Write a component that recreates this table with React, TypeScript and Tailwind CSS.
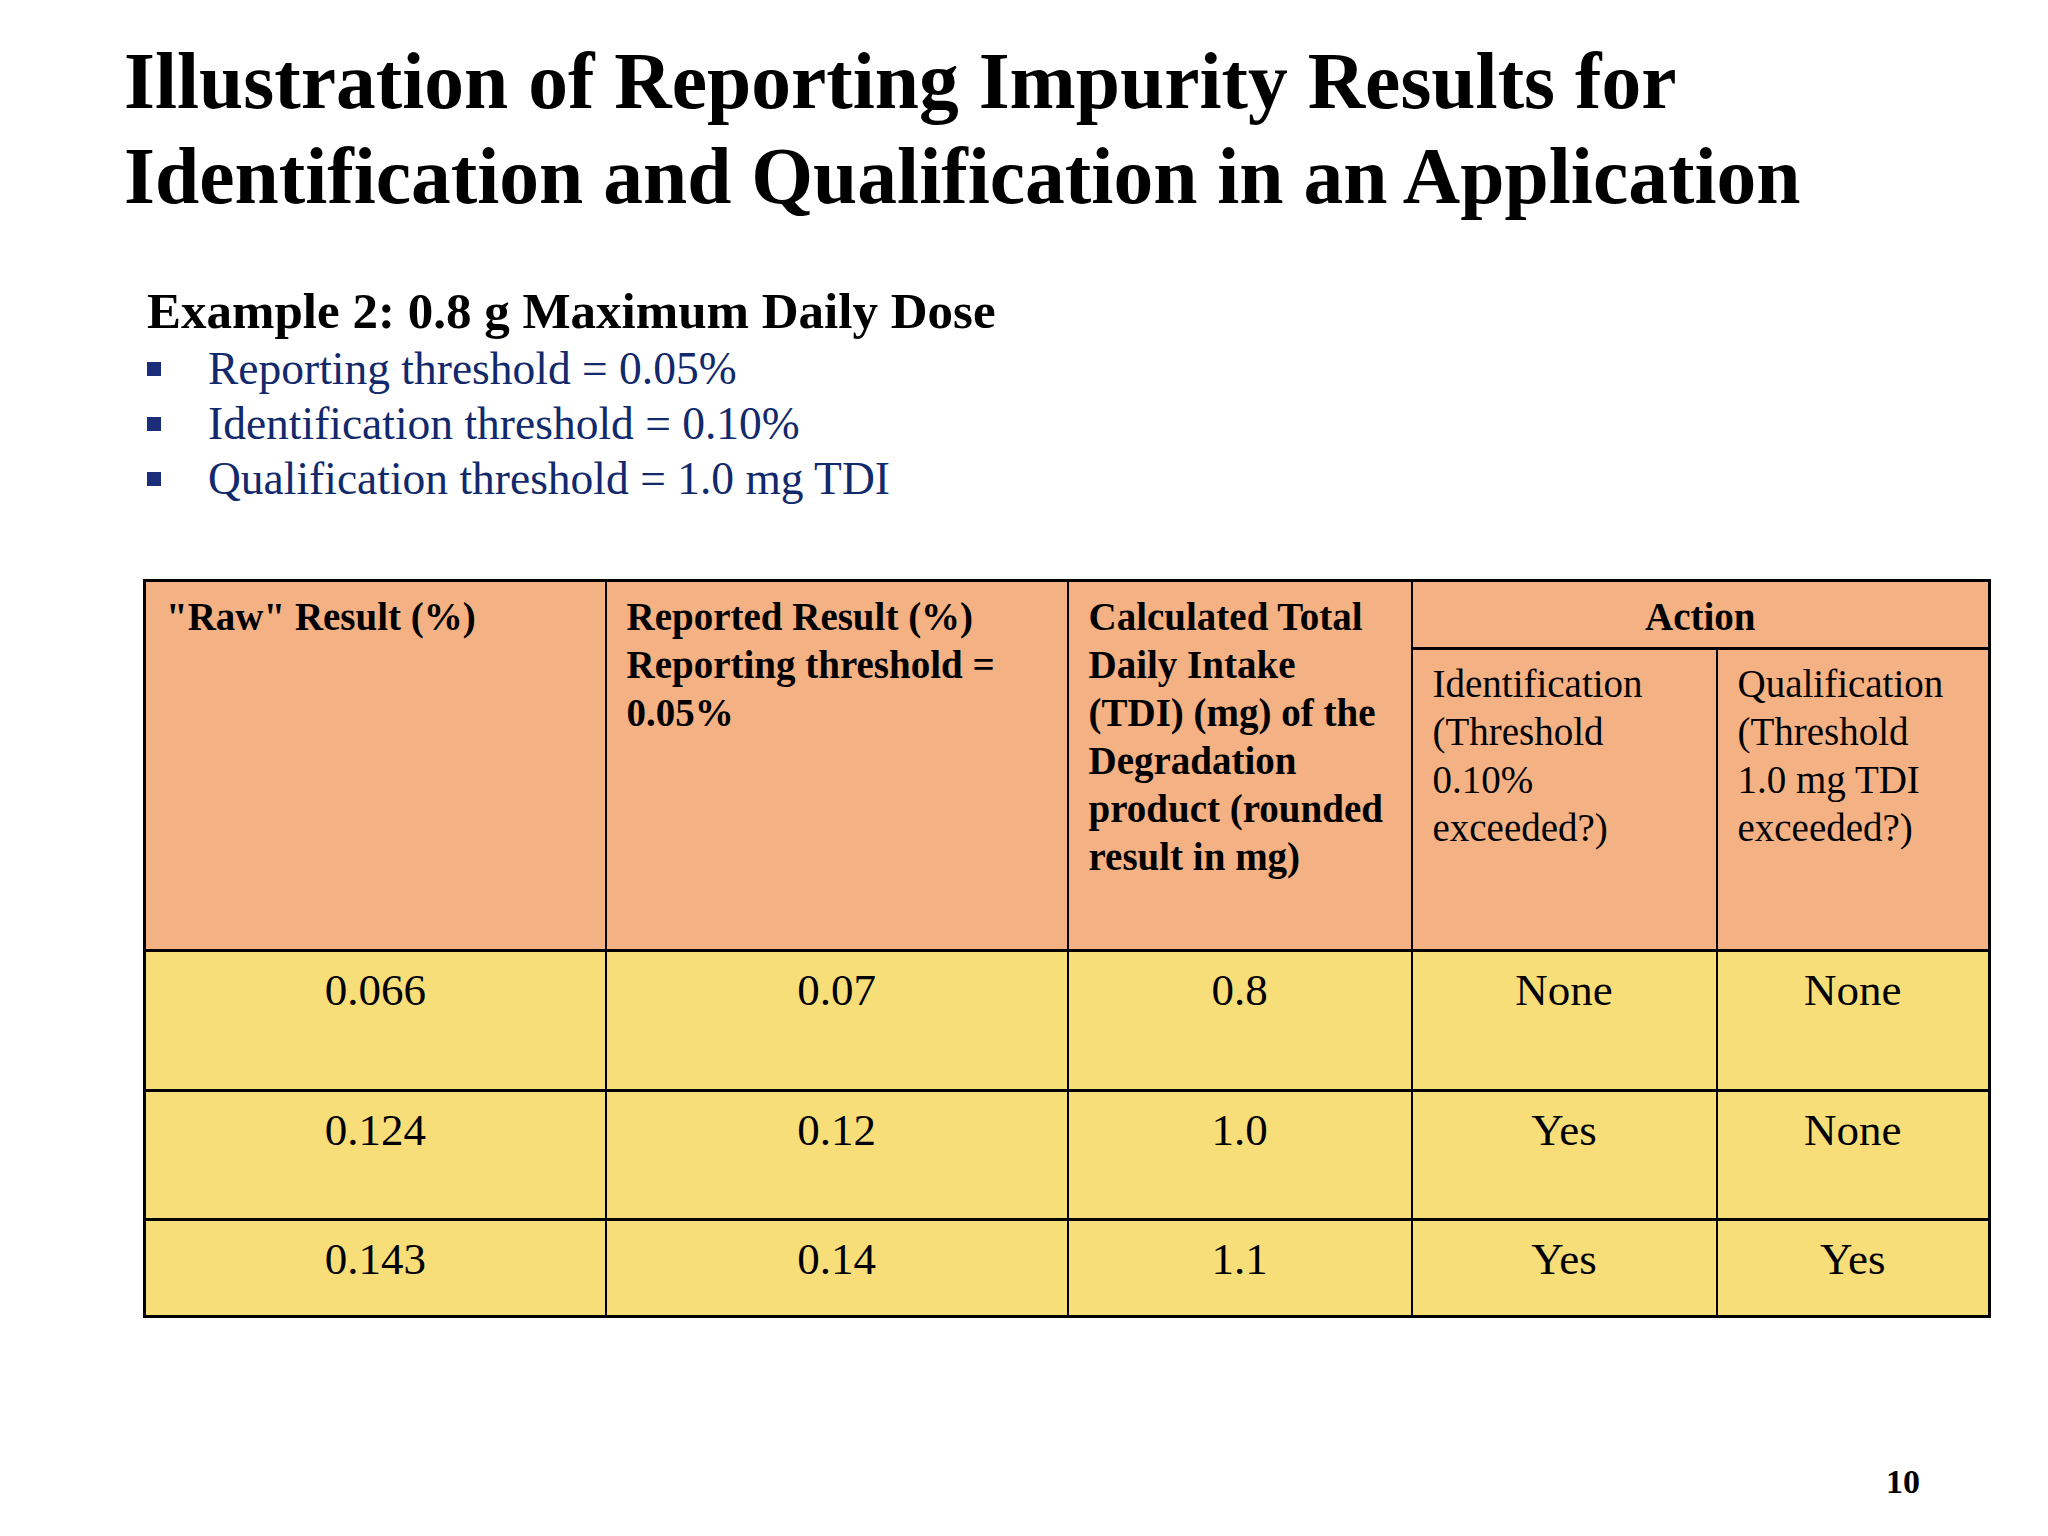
const serif = { fontFamily: '"Liberation Serif", "Times New Roman", serif' };

const bullets = [
  'Reporting threshold = 0.05%',
  'Identification threshold = 0.10%',
  'Qualification threshold = 1.0 mg TDI',
];

const rows = [
  { raw: '0.066', reported: '0.07', tdi: '0.8', ident: 'None', qual: 'None', h: 'h-[140px]' },
  { raw: '0.124', reported: '0.12', tdi: '1.0', ident: 'Yes', qual: 'None', h: 'h-[129px]' },
  { raw: '0.143', reported: '0.14', tdi: '1.1', ident: 'Yes', qual: 'Yes', h: 'h-[97px]' },
];

export default function App(): React.ReactElement {
  return (
    <div className="min-h-[1536px] w-[2048px] bg-white text-black" style={serif}>
      {/* Title */}
      <h1 className="pl-[124px] pt-[34px] text-[79.5px] font-bold leading-[95px]">
        Illustration of Reporting Impurity Results for
        <br />
        Identification and Qualification in an Application
      </h1>

      {/* Example heading + bullets */}
      <div className="pl-[147px] pt-[57px]">
        <h2 className="text-[51px] font-bold leading-[60px]">Example 2: 0.8 g Maximum Daily Dose</h2>
        <ul className="text-[45.5px] leading-[55px] text-[#12296b]">
          {bullets.map((b) => (
            <li key={b} className="flex items-center">
              <span className="mr-[47px] mt-[1px] inline-block h-[14px] w-[14px] bg-[#1b2c78]" />
              {b}
            </li>
          ))}
        </ul>
      </div>

      {/* Table */}
      <div className="pl-[143px] pt-[73px]">
        <table className="w-[1845px] table-fixed border-collapse border-[3px] border-black">
          <colgroup>
            <col className="w-[461px]" />
            <col className="w-[462px]" />
            <col className="w-[344px]" />
            <col className="w-[305px]" />
            <col className="w-[273px]" />
          </colgroup>
          <thead className="bg-[#f4b183] text-left align-top text-[39px] leading-[48px]">
            <tr className="h-[68px]">
              <th rowSpan={2} className="border-2 border-black pl-[20px] pt-[11px] align-top font-bold">
                "Raw" Result (%)
              </th>
              <th rowSpan={2} className="border-2 border-black pl-[20px] pt-[11px] align-top font-bold">
                Reported Result (%)
                <br />
                Reporting threshold =
                <br />
                0.05%
              </th>
              <th rowSpan={2} className="border-2 border-black pl-[20px] pr-[6px] pt-[11px] align-top font-bold">
                Calculated Total
                <br />
                Daily Intake
                <br />
                (TDI) (mg) of the
                <br />
                Degradation
                <br />
                product (rounded
                <br />
                result in mg)
              </th>
              <th colSpan={2} className="border-2 border-b-[3px] border-black pt-[11px] text-center align-top font-bold">
                Action
              </th>
            </tr>
            <tr className="h-[302px]">
              <th className="whitespace-nowrap border-2 border-black pl-[20px] pt-[10px] align-top font-normal">
                Identification
                <br />
                (Threshold
                <br />
                0.10%
                <br />
                exceeded?)
              </th>
              <th className="whitespace-nowrap border-2 border-black pl-[20px] pt-[10px] align-top font-normal">
                Qualification
                <br />
                (Threshold
                <br />
                1.0 mg TDI
                <br />
                exceeded?)
              </th>
            </tr>
          </thead>
          <tbody className="bg-[#f8de78] text-center text-[45px] leading-[52px]">
            {rows.map((r) => (
              <tr key={r.raw} className={r.h}>
                {[r.raw, r.reported, r.tdi, r.ident, r.qual].map((v, i) => (
                  <td
                    key={`${r.raw}-${String(i)}`}
                    className="border-x-2 border-y-[3px] border-black pt-[12px] align-top"
                  >
                    {v}
                  </td>
                ))}
              </tr>
            ))}
          </tbody>
        </table>
      </div>

      {/* Page number */}
      <div className="flex justify-end pr-[128px] pt-[144px] text-[34px] font-bold leading-[40px]">10</div>
    </div>
  );
}
